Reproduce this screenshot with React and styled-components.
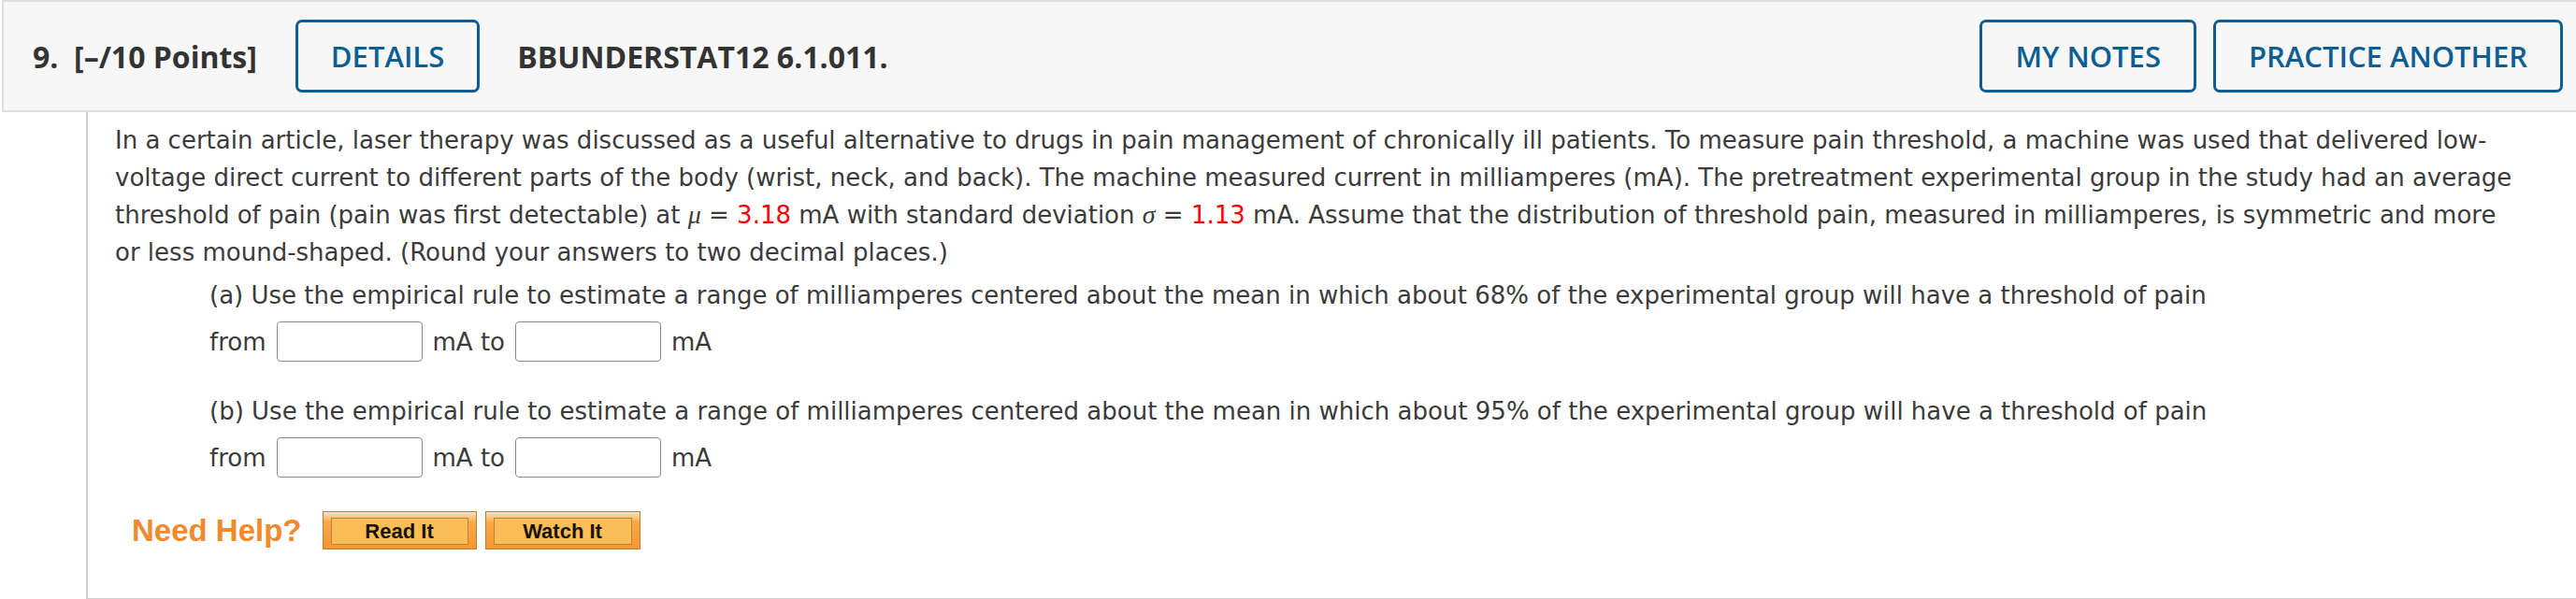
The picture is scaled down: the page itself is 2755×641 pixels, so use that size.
import React from 'react'
import styled, { createGlobalStyle } from 'styled-components'

const GlobalStyle = createGlobalStyle`
  body {
    margin: 0;
    background: #fff;
  }
`

const Header = styled.div`
  display: flex;
  align-items: center;
  height: 116px;
  margin-left: 2px;
  padding: 0 14px 0 31px;
  background: #f7f7f7;
  border: 2px solid #dedede;
  border-right: none;
  font-family: "Open Sans", sans-serif;
`

const QuestionNo = styled.span`
  font-weight: 700;
  font-size: 32px;
  color: #333;
  white-space: pre;
`

const Code = styled.span`
  margin-left: 40px;
  font-weight: 700;
  font-size: 32px;
  color: #333;
`

const Spacer = styled.div`
  flex: 1;
`

const OutlineButton = styled.button`
  height: 78px;
  box-sizing: border-box;
  margin-left: ${p => p.$gap || 0}px;
  padding: 0 35px;
  border: 3px solid #0b5e93;
  border-radius: 7px;
  background: transparent;
  color: #0b5e93;
  font-family: "Open Sans", sans-serif;
  font-weight: 600;
  font-size: 31px;
  cursor: pointer;
`

const Content = styled.div`
  margin-left: 92px;
  border-left: 2px solid #cfcfcf;
  border-bottom: 2px solid #cfcfcf;
  padding: 10px 45px 52px 29px;
  font-family: "DejaVu Sans", Verdana, sans-serif;
  font-size: 26px;
  line-height: 40px;
  color: #3b3b3b;
`

const Para = styled.p`
  margin: 0;
`

const NoWrap = styled.span`
  white-space: nowrap;
`

const Red = styled.span`
  color: #f00;
`

const MathVar = styled.i`
  font-family: "Liberation Serif", serif;
  font-size: 28px;
  line-height: 1;
`

const Part = styled.div`
  margin-top: ${p => p.$top}px;
  padding-left: 101px;
`

const PartText = styled.p`
  margin: 0;
`

const AnswerRow = styled.div`
  display: flex;
  align-items: center;
  gap: 10px;
  height: 43px;
  margin-top: 8px;
`

const Answer = styled.input`
  width: 156px;
  height: 43px;
  box-sizing: border-box;
  border: 1px solid #8a8a8a;
  border-radius: 4px;
  margin: 0 1px;
`

const HelpRow = styled.div`
  display: flex;
  align-items: center;
  height: 41px;
  margin-top: 36px;
  padding-left: 18px;
`

const NeedHelp = styled.span`
  margin-right: 22px;
  font-family: "Liberation Sans", Arial, sans-serif;
  font-weight: 700;
  font-size: 33px;
  color: #ef8a2d;
`

const HelpButton = styled.button`
  width: ${p => p.$w}px;
  height: 41px;
  box-sizing: border-box;
  margin-left: ${p => p.$gap || 0}px;
  padding: 6px 8px 4px;
  border: 1px solid #c57d34;
  background: linear-gradient(to bottom, #fde3bf 0%, #f9a846 28%, #f79632 100%);
  cursor: pointer;
`

const HelpInner = styled.span`
  display: flex;
  align-items: center;
  justify-content: center;
  height: 100%;
  box-sizing: border-box;
  border: 1px solid #b78343;
  background: #fbbd55;
  font-family: "Liberation Sans", Arial, sans-serif;
  font-weight: 700;
  font-size: 22px;
  color: #1a1208;
`

const parts = [
  { label: '(a)', pct: '68%', top: 6 },
  { label: '(b)', pct: '95%', top: 33 }
]

export default function App() {
  return (
    <>
      <GlobalStyle />
      <Header>
        <QuestionNo>{'9.  [–/10 Points]'}</QuestionNo>
        <OutlineButton $gap={41}>DETAILS</OutlineButton>
        <Code>BBUNDERSTAT12 6.1.011.</Code>
        <Spacer />
        <OutlineButton>MY NOTES</OutlineButton>
        <OutlineButton $gap={18}>PRACTICE ANOTHER</OutlineButton>
      </Header>
      <Content>
        <Para>
          In a certain article, laser therapy was discussed as a useful alternative to drugs in pain
          management of chronically ill patients. To measure pain threshold, a machine was used that
          delivered low-voltage direct current to different parts of the body (wrist, neck, and back).
          The machine measured current in milliamperes (mA). The pretreatment experimental group in
          the study had an average threshold of pain (pain was first detectable) at <MathVar>μ</MathVar> = <Red>3.18</Red> mA
          with standard deviation <MathVar>σ</MathVar> = <Red>1.13</Red> mA. Assume that the distribution of threshold
          pain, measured in milliamperes, is symmetric and more <NoWrap>or less</NoWrap> mound-shaped. (Round your
          answers to two decimal places.)
        </Para>
        {parts.map(p => (
          <Part key={p.label} $top={p.top}>
            <PartText>
              {p.label} Use the empirical rule to estimate a range of milliamperes centered about the
              mean in which about {p.pct} of the experimental group will have a threshold of pain
            </PartText>
            <AnswerRow>
              <span>from</span>
              <Answer type="text" />
              <span>mA to</span>
              <Answer type="text" />
              <span>mA</span>
            </AnswerRow>
          </Part>
        ))}
        <HelpRow>
          <NeedHelp>Need Help?</NeedHelp>
          <HelpButton $w={165}><HelpInner>Read It</HelpInner></HelpButton>
          <HelpButton $w={166} $gap={9}><HelpInner>Watch It</HelpInner></HelpButton>
        </HelpRow>
      </Content>
    </>
  )
}
